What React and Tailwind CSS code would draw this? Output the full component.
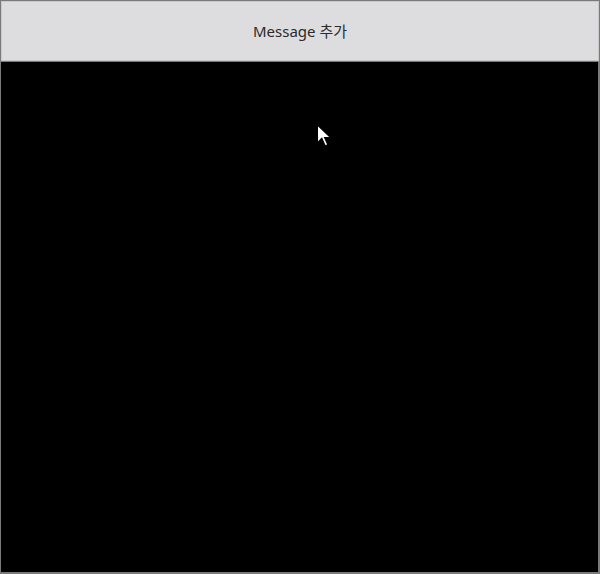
export default function App() {
    return (
        <div className="w-[600px] h-[574px] flex flex-col bg-black" style={{ fontFamily: '"Noto Sans", "Noto Sans CJK KR", sans-serif' }}>
            {/* Add button */}
            <button className="h-[62px] w-full shrink-0 bg-[#dddcde] border border-[#7a7a7a] shadow-[inset_0_0_0_1px_#c8c8c8] text-[15px] text-[#2a2a2a] flex items-center justify-center">
                Message 추가
            </button>

            {/* Output area */}
            <div className="relative flex-1 bg-black border-l border-r-2 border-b-2 border-[#7a7a7a]">
                <svg className="absolute left-[315px] top-[62px]" width="16" height="24" viewBox="0 0 14 22">
                    <path d="M1 1 L1 17 L5 13 L8 20 L10.5 19 L7.5 12.5 L13 12.5 Z" fill="#fff" stroke="#000" strokeWidth="1" />
                </svg>
            </div>
        </div>
    );
}
